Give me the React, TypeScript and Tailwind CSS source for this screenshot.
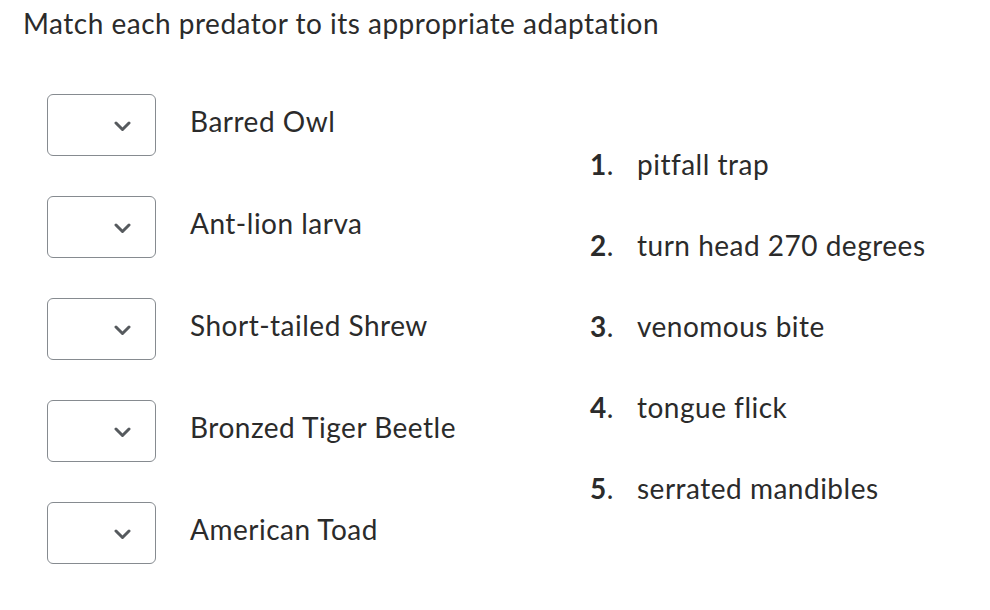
import React, { useState } from 'react';

const predators = [
  'Barred Owl',
  'Ant-lion larva',
  'Short-tailed Shrew',
  'Bronzed Tiger Beetle',
  'American Toad',
];

const adaptations = [
  'pitfall trap',
  'turn head 270 degrees',
  'venomous bite',
  'tongue flick',
  'serrated mandibles',
];

const Chevron = () => (
  <svg width="17" height="11" viewBox="0 0 17 11" fill="none">
    <path d="M2 2l6.5 6.5L15 2" stroke="#565a5e" strokeWidth="3" strokeLinecap="round" strokeLinejoin="round" />
  </svg>
);

const MatchRow = ({ label, value, onChange }: { label: string; value: string; onChange: (v: string) => void }) => (
  <div className="flex items-center h-[62px]">
    <div className="relative w-[109px] h-[62px] rounded-[6px] border border-[#868b90] bg-white">
      <select
        value={value}
        onChange={(e) => onChange(e.target.value)}
        className="appearance-none w-full h-full bg-transparent outline-none px-3 text-[22px] text-[#2b2b2b]"
      >
        <option value=""></option>
        {adaptations.map((_, i) => (
          <option key={i} value={String(i + 1)}>{i + 1}</option>
        ))}
      </select>
      <div className="pointer-events-none absolute right-[24px] top-[26px]">
        <Chevron />
      </div>
    </div>
    <span className="ml-[34px] -mt-[8px] text-[28px] leading-8 tracking-[0.5px] text-[#2b2b2b]">{label}</span>
  </div>
);

export default function App() {
  const [answers, setAnswers] = useState<string[]>(predators.map(() => ''));

  return (
    <div className="w-[990px] h-[610px] bg-white font-['Lato','Liberation_Sans',sans-serif] text-[#2b2b2b]">
      <h1 className="pt-[7px] pl-[23px] text-[28px] leading-8 font-normal tracking-[0.5px]">
        Match each predator to its appropriate adaptation
      </h1>
      <div className="flex mt-[55px] pl-[47px]">
        <div className="flex flex-col gap-[40px] w-[543px]">
          {predators.map((p, i) => (
            <MatchRow
              key={p}
              label={p}
              value={answers[i]}
              onChange={(v) => setAnswers(prev => prev.map((a, j) => (j === i ? v : a)))}
            />
          ))}
        </div>
        <ol className="flex flex-col gap-[49px] mt-[54px]">
          {adaptations.map((a, i) => (
            <li key={a} className="flex text-[28px] leading-8 tracking-[0.5px]">
              <span className="w-[47px]"><span className="font-bold">{i + 1}</span>.</span>
              <span>{a}</span>
            </li>
          ))}
        </ol>
      </div>
    </div>
  );
}
